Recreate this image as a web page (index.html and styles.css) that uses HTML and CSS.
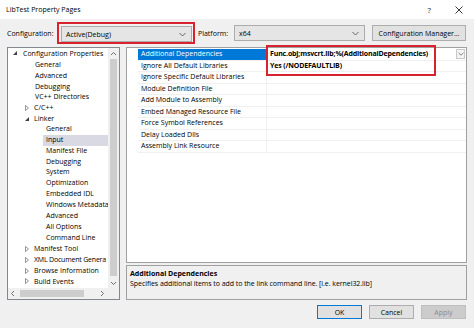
FILE: index.html
```html
<!DOCTYPE html>
<html lang="en">
<head>
    <meta charset="UTF-8">
    <title>LibTest Property Pages</title>
    <link rel="stylesheet" href="styles.css">
</head>
<body>
    <div class="titlebar">
        <span class="title">LibTest Property Pages</span>
        <span class="help">?</span>
        <svg class="close" width="8" height="8" viewBox="0 0 8 8"><path d="M0.5 0.5 L7.5 7.5 M7.5 0.5 L0.5 7.5" stroke="#222" stroke-width="0.9"/></svg>
    </div>

    <div class="toolbar">
        <label class="tb-label">Configuration:</label>
        <div class="marked">
            <div class="combo combo-config">
                <span>Active(Debug)</span>
                <svg class="chev" width="7" height="5" viewBox="0 0 7 5"><path d="M0.5 1 L3.5 4 L6.5 1" fill="none" stroke="#555" stroke-width="0.9"/></svg>
            </div>
        </div>
        <label class="tb-label platform-label">Platform:</label>
        <div class="combo combo-platform">
            <span>x64</span>
            <svg class="chev" width="7" height="5" viewBox="0 0 7 5"><path d="M0.5 1 L3.5 4 L6.5 1" fill="none" stroke="#555" stroke-width="0.9"/></svg>
        </div>
        <button class="btn btn-manager">Configuration Manager...</button>
    </div>

    <div class="main">
        <div class="tree">
            <div class="tree-list">
                <div class="node lvl0"><svg class="twisty" width="8" height="8" viewBox="0 0 8 8"><path d="M6 2 L6 6 L2 6 Z" fill="#404040"/></svg><span class="node-text">Configuration Properties</span></div>
                <div class="node leaf1"><span class="node-text">General</span></div>
                <div class="node leaf1"><span class="node-text">Advanced</span></div>
                <div class="node leaf1"><span class="node-text">Debugging</span></div>
                <div class="node leaf1"><span class="node-text">VC++ Directories</span></div>
                <div class="node lvl1"><svg class="twisty" width="8" height="8" viewBox="0 0 8 8"><path d="M2.5 1.5 L5.5 4 L2.5 6.5 Z" fill="none" stroke="#777" stroke-width="0.8"/></svg><span class="node-text">C/C++</span></div>
                <div class="node lvl1"><svg class="twisty" width="8" height="8" viewBox="0 0 8 8"><path d="M6 2 L6 6 L2 6 Z" fill="#404040"/></svg><span class="node-text">Linker</span></div>
                <div class="node leaf2"><span class="node-text">General</span></div>
                <div class="node leaf2 selected"><span class="node-text">Input</span></div>
                <div class="node leaf2"><span class="node-text">Manifest File</span></div>
                <div class="node leaf2"><span class="node-text">Debugging</span></div>
                <div class="node leaf2"><span class="node-text">System</span></div>
                <div class="node leaf2"><span class="node-text">Optimization</span></div>
                <div class="node leaf2"><span class="node-text">Embedded IDL</span></div>
                <div class="node leaf2"><span class="node-text">Windows Metadata</span></div>
                <div class="node leaf2"><span class="node-text">Advanced</span></div>
                <div class="node leaf2"><span class="node-text">All Options</span></div>
                <div class="node leaf2"><span class="node-text">Command Line</span></div>
                <div class="node lvl1"><svg class="twisty" width="8" height="8" viewBox="0 0 8 8"><path d="M2.5 1.5 L5.5 4 L2.5 6.5 Z" fill="none" stroke="#777" stroke-width="0.8"/></svg><span class="node-text">Manifest Tool</span></div>
                <div class="node lvl1"><svg class="twisty" width="8" height="8" viewBox="0 0 8 8"><path d="M2.5 1.5 L5.5 4 L2.5 6.5 Z" fill="none" stroke="#777" stroke-width="0.8"/></svg><span class="node-text tight">XML Document Genera</span></div>
                <div class="node lvl1"><svg class="twisty" width="8" height="8" viewBox="0 0 8 8"><path d="M2.5 1.5 L5.5 4 L2.5 6.5 Z" fill="none" stroke="#777" stroke-width="0.8"/></svg><span class="node-text">Browse Information</span></div>
                <div class="node lvl1"><svg class="twisty" width="8" height="8" viewBox="0 0 8 8"><path d="M2.5 1.5 L5.5 4 L2.5 6.5 Z" fill="none" stroke="#777" stroke-width="0.8"/></svg><span class="node-text">Build Events</span></div>
            </div>
            <div class="vscroll">
                <svg class="arrow" width="7" height="5" viewBox="0 0 7 5"><path d="M1 4 L3.5 1.5 L6 4" fill="none" stroke="#606060" stroke-width="0.9"/></svg>
                <div class="vthumb"></div>
                <svg class="arrow" width="7" height="5" viewBox="0 0 7 5"><path d="M1 1 L3.5 3.5 L6 1" fill="none" stroke="#606060" stroke-width="0.9"/></svg>
            </div>
            <div class="hscroll">
                <svg class="arrow" width="5" height="7" viewBox="0 0 5 7"><path d="M4 1 L1.5 3.5 L4 6" fill="none" stroke="#606060" stroke-width="0.9"/></svg>
                <div class="hthumb"></div>
                <svg class="arrow" width="5" height="7" viewBox="0 0 5 7"><path d="M1 1 L3.5 3.5 L1 6" fill="none" stroke="#606060" stroke-width="0.9"/></svg>
            </div>
            <div class="corner"></div>
        </div>

        <div class="right">
            <div class="grid">
                <div class="row selected">
                    <span class="name">Additional Dependencies</span>
                    <span class="value">Func.obj;msvcrt.lib;%(AdditionalDependencies)</span>
                    <span class="drop"><svg width="6" height="4" viewBox="0 0 6 4"><path d="M0.5 0.8 L3 3.2 L5.5 0.8" fill="none" stroke="#666" stroke-width="0.8"/></svg></span>
                </div>
                <div class="row">
                    <span class="name">Ignore All Default Libraries</span>
                    <span class="value">Yes (/NODEFAULTLIB)</span>
                </div>
                <div class="row"><span class="name">Ignore Specific Default Libraries</span><span class="value"></span></div>
                <div class="row"><span class="name">Module Definition File</span><span class="value"></span></div>
                <div class="row"><span class="name">Add Module to Assembly</span><span class="value"></span></div>
                <div class="row"><span class="name">Embed Managed Resource File</span><span class="value"></span></div>
                <div class="row"><span class="name">Force Symbol References</span><span class="value"></span></div>
                <div class="row"><span class="name">Delay Loaded Dlls</span><span class="value"></span></div>
                <div class="row"><span class="name">Assembly Link Resource</span><span class="value"></span></div>
                <div class="value-mark"></div>
            </div>
            <div class="desc">
                <div class="desc-title">Additional Dependencies</div>
                <div class="desc-text">Specifies additional items to add to the link command line. [i.e. kernel32.lib]</div>
            </div>
        </div>
    </div>

    <div class="actions">
        <button class="btn btn-dialog btn-default">OK</button>
        <button class="btn btn-dialog">Cancel</button>
        <button class="btn btn-dialog btn-disabled">Apply</button>
    </div>
</body>
</html>
```

FILE: styles.css
```css
/* General Reset */
* {
    margin: 0;
    padding: 0;
    box-sizing: border-box;
}

body {
    width: 474px;
    height: 328px;
    overflow: hidden;
    background-color: #f0f0f0;
    font-family: 'Open Sans', 'Noto Sans', sans-serif;
    font-size: 7px;
    color: #000;
}

/* Title bar */
.titlebar {
    height: 19px;
    background: #ffffff;
    display: flex;
    align-items: center;
    padding-left: 6px;
}

.title {
    flex: 1;
    font-size: 7px;
}

.help {
    font-size: 8px;
    color: #222;
    margin-right: 24px;
}

.close {
    margin-right: 11px;
}

/* Configuration row */
.toolbar {
    height: 28px;
    display: flex;
    align-items: center;
    padding-left: 7px;
}

.tb-label {
    width: 50px;
}

.platform-label {
    width: 36px;
    margin-left: 3px;
}

.marked {
    border: 2px solid #d8232f;
    padding: 2px 1px 2px 2px;
    width: 138px;
    height: 22px;
}

.combo {
    height: 16px;
    background: #e5e5e5;
    border: 1px solid #acacac;
    display: flex;
    align-items: center;
    justify-content: space-between;
    padding: 0 5px 0 4px;
}

.combo-config {
    width: 131px;
}

.combo-platform {
    width: 131px;
}

.btn {
    font-family: inherit;
    font-size: 7px;
    color: #000;
    background: #e1e1e1;
    border: 1px solid #adadad;
}

.btn-manager {
    width: 94px;
    height: 16px;
    margin-left: 7px;
}

/* Main area */
.main {
    display: flex;
    padding: 0 7px;
    height: 253px;
}

.tree {
    width: 113px;
    border: 1px solid #828790;
    background: #ffffff;
    display: grid;
    grid-template-columns: 100px 11px;
    grid-template-rows: 240px 11px;
}

.tree-list {
    overflow: hidden;
    white-space: nowrap;
}

.node {
    height: 10.86px;
    display: flex;
    align-items: center;
}

.node.lvl0 {
    padding-left: 3px;
}

.node.lvl1 {
    padding-left: 15px;
}

.node.leaf1 {
    padding-left: 27px;
}

.node.leaf2 {
    padding-left: 35px;
}

.twisty {
    flex: none;
    margin-right: 3px;
}

.lvl0 .twisty {
    margin-right: 4px;
}

.node-text.tight {
    letter-spacing: -0.2px;
}

.leaf2 .node-text {
    flex: 1;
    padding: 0 3px;
    line-height: 10.86px;
}

.node.selected .node-text {
    background: #d9d9e4;
}

.vscroll {
    background: #f0f0f0;
    display: flex;
    flex-direction: column;
    align-items: center;
    padding: 3px 0 2px;
}

.vthumb {
    width: 7px;
    flex: 1;
    background: #cdcdcd;
    margin: 3px 0 5px;
}

.hscroll {
    background: #f0f0f0;
    display: flex;
    align-items: center;
    padding: 0 3px 0 2px;
}

.hthumb {
    width: 64px;
    height: 7px;
    background: #cdcdcd;
    margin: 0 auto 0 5px;
}

.corner {
    background: #f0f0f0;
}

.right {
    margin-left: 6px;
    width: 341px;
    display: flex;
    flex-direction: column;
}

.grid {
    position: relative;
    height: 216px;
    background: #ffffff;
    border: 1px solid #a0a0a0;
    padding: 1px 0 0 11px;
}

.row {
    height: 11.5px;
    display: flex;
    border-bottom: 1px solid #f0f0f0;
    white-space: nowrap;
}

.name {
    width: 129px;
    padding-left: 3px;
    border-right: 1px solid #f0f0f0;
    line-height: 10.5px;
    overflow: hidden;
}

.row.selected .name {
    background: #0078d7;
    color: #ffffff;
}

.value {
    flex: 1;
    padding-left: 3px;
    font-weight: bold;
    letter-spacing: -0.15px;
    line-height: 10.5px;
}

.drop {
    width: 9px;
    height: 10px;
    border: 1px solid #c8c8c8;
    background: #f4f4f4;
    display: flex;
    align-items: center;
    justify-content: center;
    margin-right: 1px;
}

/* annotation box drawn over the values */
.value-mark {
    position: absolute;
    left: 139px;
    top: -3px;
    width: 170px;
    height: 31px;
    border: 2px solid #d8232f;
}

.desc {
    margin-top: 2px;
    height: 35px;
    border: 1px solid #a0a0a0;
    padding: 3px 3px;
}

.desc-title {
    font-weight: bold;
    line-height: 10px;
}

.desc-text {
    line-height: 10px;
    letter-spacing: -0.05px;
}

/* Dialog buttons */
.actions {
    display: flex;
    justify-content: flex-end;
    gap: 7px;
    padding: 5px 8px 0 0;
}

.btn-dialog {
    width: 45px;
    height: 14px;
}

.btn-default {
    border-color: #0078d7;
}

.btn-disabled {
    background: #cccccc;
    border-color: #bfbfbf;
    color: #8a8a8a;
}
```
